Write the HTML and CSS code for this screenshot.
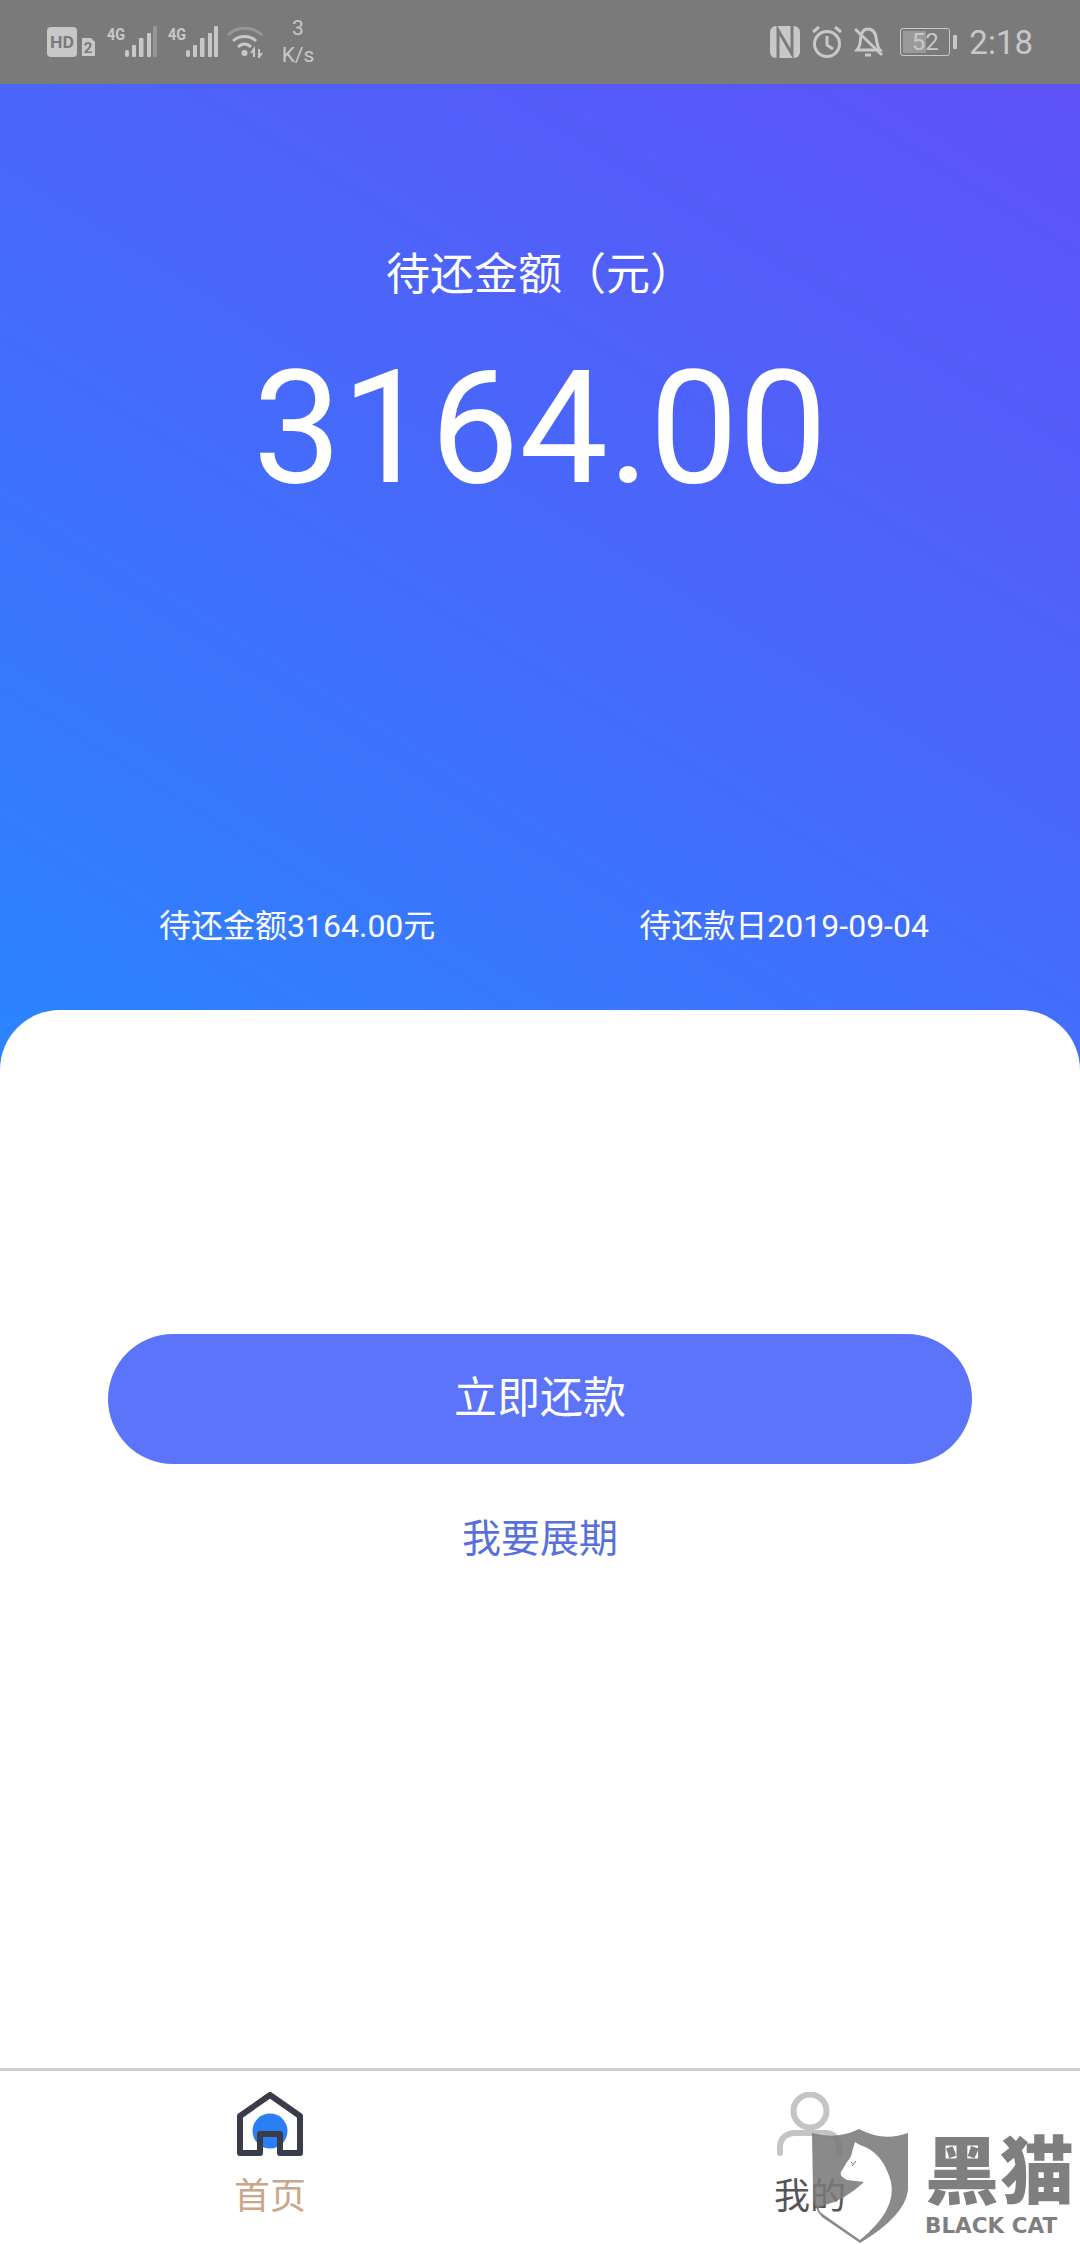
FILE: index.html
```html
<!DOCTYPE html>
<html lang="zh-CN">

<head>
  <meta charset="UTF-8">
  <meta name="viewport" content="width=device-width, initial-scale=1.0">
  <title>待还金额</title>
  <link rel="stylesheet" href="styles.css">
</head>

<body>
  <div class="page">
    <!-- 状态栏 -->
    <div class="statusbar">
      <div class="status-left">
        <svg class="ic-hd" width="48" height="32" viewBox="0 0 48 32">
          <rect x="0" y="1" width="30" height="30" rx="4" fill="#c8c8c8" />
          <text x="15" y="22" text-anchor="middle" class="ic-label dark" textLength="24" lengthAdjust="spacingAndGlyphs">HD</text>
          <path d="M35 12H44L48 16V30H35Z" fill="#c8c8c8" />
          <text x="41" y="27" text-anchor="middle" class="ic-small dark">2</text>
        </svg>
        <svg width="50" height="34" viewBox="0 0 50 34">
          <text x="0" y="15" class="ic-label light" textLength="18" lengthAdjust="spacingAndGlyphs">4G</text>
          <rect x="18" y="25" width="4" height="7" rx="2" fill="#c8c8c8" />
          <rect x="25" y="20" width="4" height="12" rx="1" fill="#c8c8c8" />
          <rect x="32" y="13" width="4.500" height="19" rx="1" fill="#c8c8c8" />
          <rect x="40" y="8" width="4" height="24" rx="1" fill="#c8c8c8" />
          <rect x="46" y="1" width="4" height="31" rx="1" fill="#969696" />
        </svg>
        <svg width="50" height="34" viewBox="0 0 50 34">
          <text x="0" y="15" class="ic-label light" textLength="18" lengthAdjust="spacingAndGlyphs">4G</text>
          <rect x="18" y="25" width="4" height="7" rx="2" fill="#c8c8c8" />
          <rect x="25" y="20" width="4" height="12" rx="1" fill="#c8c8c8" />
          <rect x="32" y="13" width="4.500" height="19" rx="1" fill="#c8c8c8" />
          <rect x="40" y="8" width="4" height="24" rx="1" fill="#c8c8c8" />
          <rect x="46" y="1" width="4" height="31" rx="1" fill="#c8c8c8" />
        </svg>
        <svg class="ic-wifi" width="36" height="32" viewBox="0 0 36 32" fill="none">
          <path d="M1 9C10 0 26 0 35 9" stroke="#969696" stroke-width="3" />
          <path d="M6 15C12 9 23 9 29 15" stroke="#c8c8c8" stroke-width="3" />
          <path d="M11 21C15 17 20 17 24 21" stroke="#c8c8c8" stroke-width="3" />
          <circle cx="17.500" cy="27" r="3" fill="#c8c8c8" />
          <path d="M27 31V23L24 27M32 23V31L35 27" stroke="#c8c8c8" stroke-width="2" />
        </svg>
        <div class="speed">3<br>K/s</div>
      </div>
      <div class="status-right">
        <svg width="30" height="32" viewBox="0 0 30 32">
          <rect width="30" height="32" rx="6" fill="#c8c8c8" />
          <path d="M8 32V4L22 28V0" fill="none" stroke="#7a7a7a" stroke-width="3" />
        </svg>
        <svg width="30" height="34" viewBox="0 0 30 34" fill="none" stroke="#c8c8c8" stroke-width="3">
          <circle cx="15" cy="19" r="12.500" />
          <path d="M15 11V20L21 24M1 7L7 2M29 7L23 2" />
        </svg>
        <svg width="29" height="34" viewBox="0 0 29 34" fill="none" stroke="#c8c8c8" stroke-width="3">
          <path d="M3 25C7 21 6 16 7 11C8 6 11 4 14 4C18 4 21 7 22 12C23 17 23 22 26 25Z" />
          <path d="M1 4L28 30M11 30H17" />
        </svg>
        <div class="battery">
          <div class="battery-body"><span class="battery-fill"></span><span class="battery-num">52</span></div>
          <span class="battery-cap"></span>
        </div>
        <div class="clock">2:18</div>
      </div>
    </div>

    <!-- 金额区 -->
    <div class="hero">
      <div class="hero-title">待还金额（元）</div>
      <div class="hero-amount">3164.00</div>
      <div class="hero-info">
        <span>待还金额3164.00元</span>
        <span>待还款日2019-09-04</span>
      </div>
    </div>

    <div class="panel">
      <a href="#" class="repay">立即还款</a>
      <a href="#" class="extend">我要展期</a>
    </div>

    <!-- 底部导航 -->
    <div class="tabbar">
      <a href="#" class="tab tab-home">
        <svg width="66" height="66" viewBox="0 0 66 66" fill="none">
          <circle cx="33" cy="39" r="17.500" fill="#2a7ff5" />
          <path d="M22 61H3V24L33 3L63 24V61H43V42H23V61Z" stroke="#3a3c4a" stroke-width="6" stroke-linejoin="round" />
        </svg>
        <span>首页</span>
      </a>
      <a href="#" class="tab tab-mine">
        <svg width="66" height="66" viewBox="0 0 66 66" fill="none" stroke="#c4c4c4" stroke-width="6" stroke-linecap="round">
          <circle cx="33" cy="19" r="16.500" />
          <path d="M3 61V55C3 46 10 41 18 41H48C56 41 62 46 62 55V61" />
        </svg>
        <span>我的</span>
      </a>
    </div>

    <!-- 水印 -->
    <div class="watermark">
      <svg width="115" height="124" viewBox="0 0 115 124">
        <path fill-rule="evenodd" fill="#7a7a7a" fill-opacity=".88" d="M7 13Q32 20 54 9Q78 22 103 13V70Q100 96 55 123L17 97Q8 88 8 70ZM50 22L55 25Q78 32 86 62Q92 90 55 120L19 95Q13 91 14 88L20 85Q40 80 59 62L42 60Q34 56 36 52L42 42Q47 36 47 32Z" />
        <path d="M47 46L51 41M46 42L48 44" stroke="#7a7a7a" fill="none" />
      </svg>
      <div class="watermark-text">
        <div class="watermark-cn">黑猫</div>
        <div class="watermark-en">BLACK CAT</div>
      </div>
    </div>
  </div>
</body>

</html>
```
FILE: styles.css
```css
* {
  padding: 0;
  margin: 0;
  box-sizing: border-box;
}

a {
  text-decoration: none;
}

body {
  width: 1080px;
  font-family: "Roboto", "Noto Sans CJK SC", sans-serif;
}

.page {
  position: relative;
  display: flex;
  flex-direction: column;
  height: 2244px;
  overflow: hidden;
  background-color: #fff;
}

.statusbar {
  display: flex;
  justify-content: space-between;
  align-items: center;
  height: 84px;
  padding: 0 47px;
  color: #c8c8c8;
  background-color: #7a7a7a;
}

.status-left,
.status-right {
  display: flex;
  align-items: center;
}

.status-left {
  gap: 11px;
}

.status-right {
  gap: 12px;
}

.ic-label {
  font-size: 17px;
  font-weight: 700;
}

.ic-small {
  font-size: 15px;
  font-weight: 700;
}

.dark {
  fill: #7a7a7a;
}

.light {
  fill: #c8c8c8;
}

.ic-hd {
  margin-right: 1px;
}

.ic-wifi {
  margin-left: -2px;
}

.speed {
  width: 44px;
  margin-left: 2px;
  text-align: center;
  line-height: 27px;
  font-size: 21px;
}

.battery {
  display: flex;
  align-items: center;
  gap: 3px;
  margin-left: 5px;
}

.battery-body {
  position: relative;
  width: 50px;
  height: 28px;
  padding: 2px;
  border: 1px solid #c8c8c8;
  border-radius: 3px;
}

.battery-fill {
  display: block;
  width: 52%;
  height: 100%;
  background-color: #9a9a9a;
}

.battery-num {
  position: absolute;
  top: 0;
  left: 0;
  width: 100%;
  text-align: center;
  line-height: 26px;
  font-size: 24px;
}

.battery-cap {
  width: 4px;
  height: 14px;
  border-radius: 1px;
  background-color: #c8c8c8;
}

.clock {
  font-size: 33px;
}

.hero {
  height: 986px;
  padding-top: 163px;
  color: #fff;
  background: linear-gradient(212deg, #5f52f7 0%, #4a66fa 42%, #2a85ff 100%);
}

.hero-title {
  text-align: center;
  line-height: 56px;
  font-size: 44px;
}

.hero-amount {
  margin-top: 30px;
  text-align: center;
  line-height: 190px;
  font-size: 158px;
}

.hero-info {
  display: flex;
  margin-top: 381px;
  padding-left: 159px;
  line-height: 44px;
  font-size: 32px;
}

.hero-info span:last-child {
  margin-left: 204px;
}

.panel {
  display: flex;
  flex: 1;
  flex-direction: column;
  align-items: center;
  margin-top: -60px;
  padding-top: 324px;
  border-radius: 60px 60px 0 0;
  background-color: #fff;
}

.repay {
  width: 864px;
  height: 130px;
  border-radius: 65px;
  text-align: center;
  line-height: 128px;
  font-size: 43px;
  color: #fff;
  background-color: #5c74f9;
}

.extend {
  margin-top: 51px;
  line-height: 48px;
  font-size: 39px;
  color: #5670dc;
}

.tabbar {
  display: flex;
  height: 176px;
  border-top: 3px solid #cfcfcf;
  background-color: #fff;
}

.tab {
  display: flex;
  flex-direction: column;
  align-items: center;
  width: 50%;
  padding-top: 21px;
  font-size: 36px;
}

.tab span {
  margin-top: 14px;
  line-height: 50px;
}

.tab-home {
  color: #c8a78a;
}

.tab-mine {
  color: #555;
}

.watermark {
  position: absolute;
  right: 0;
  bottom: 0;
  display: flex;
  gap: 5px;
  width: 275px;
  height: 124px;
  color: #7f7f7f;
}

.watermark svg {
  flex-shrink: 0;
}

.watermark-text {
  padding-top: 17px;
  white-space: nowrap;
}

.watermark-cn {
  line-height: 72px;
  letter-spacing: 1px;
  font-size: 74px;
  font-weight: 900;
}

.watermark-en {
  margin-top: 6px;
  line-height: 22px;
  font-family: "DejaVu Sans", sans-serif;
  font-size: 21.5px;
  font-weight: 700;
}
```
